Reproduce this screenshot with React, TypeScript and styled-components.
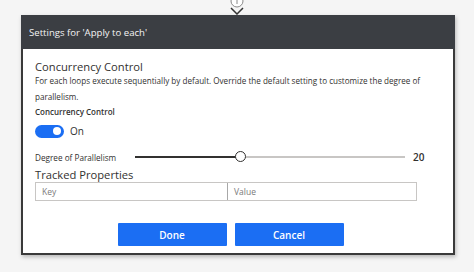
import { createGlobalStyle, styled } from "styled-components";

const GlobalStyle = createGlobalStyle`
  html, body {
    margin: 0;
    padding: 0;
    background: #f5f5f5;
    font-family: "Open Sans", "Noto Sans", sans-serif;
    color: #323130;
  }
`;

const Page = styled.div`
  width: 474px;
  height: 275px;
  display: flex;
  flex-direction: column;
  align-items: center;
  overflow: hidden;
  border-bottom: 3px solid #ffffff;
  box-sizing: border-box;
`;

const Connector = styled.svg`
  display: block;
  height: 15px;
  width: 20px;
`;

const Dialog = styled.div`
  width: 434px;
  margin-left: 2px;
  display: flex;
  flex-direction: column;
  box-shadow: 1px 2px 4px rgba(0, 0, 0, 0.25);
`;

const Header = styled.div`
  height: 34px;
  background: #3b3e43;
  color: #f3f3f3;
  font-size: 9.6px;
  display: flex;
  align-items: center;
  padding-left: 8px;
`;

const Body = styled.div`
  background: #ffffff;
  border: 2px solid #3a3a3a;
  border-top: none;
  padding: 10px 12px 7px 12px;
  display: flex;
  flex-direction: column;
`;

const SectionTitle = styled.div<{ $top?: number }>`
  font-size: 11.2px;
  line-height: 16px;
  margin-top: ${(p) => p.$top ?? 0}px;
  color: #323130;
`;

const Description = styled.div`
  font-size: 8.1px;
  line-height: 16px;
  margin-top: -2px;
  width: 400px;
  color: #323130;
`;

const FieldLabel = styled.div<{ $bold?: boolean }>`
  font-size: 8px;
  line-height: 13px;
  font-weight: ${(p) => (p.$bold ? 600 : 400)};
`;

const ToggleRow = styled.div`
  display: flex;
  align-items: center;
  gap: 6px;
  margin-top: 6px;
  font-size: 10px;
`;

const Toggle = styled.div`
  width: 29px;
  height: 13px;
  border-radius: 7px;
  background: #1b6ef3;
  position: relative;
  &::after {
    content: "";
    position: absolute;
    right: 3px;
    top: 2.5px;
    width: 8px;
    height: 8px;
    border-radius: 50%;
    background: #ffffff;
  }
`;

const SliderRow = styled.div`
  display: flex;
  align-items: center;
  margin-top: 12px;
  height: 14px;
`;

const SliderLabel = styled(FieldLabel)`
  width: 100px;
  font-size: 8.2px;
`;

const Track = styled.div`
  width: 270px;
  height: 2px;
  background: #c8c6c4;
  position: relative;
`;

const Filled = styled.div`
  height: 2px;
  background: #323130;
`;

const Thumb = styled.div`
  position: absolute;
  top: -5px;
  width: 9px;
  height: 9px;
  margin-left: -8px;
  border: 1.5px solid #323130;
  border-radius: 50%;
  background: #ffffff;
`;

const SliderValue = styled.div`
  font-size: 10px;
  font-weight: 600;
  margin-left: 8px;
`;

const PropsGrid = styled.div`
  display: grid;
  grid-template-columns: 191px 191px;
  height: 19px;
  margin-top: -1px;
  border: 1px solid #c8c6c4;
  width: 382px;
  box-sizing: border-box;
`;

const PropInput = styled.div`
  font-size: 8.5px;
  color: #7a7a7a;
  display: flex;
  align-items: center;
  padding-left: 6px;
  & + & {
    border-left: 1px solid #a8a8a8;
  }
`;

const Actions = styled.div`
  display: flex;
  justify-content: center;
  gap: 8px;
  margin-top: 22px;
  padding-right: 15px;
`;

const Button = styled.button`
  width: 109px;
  height: 23px;
  border: none;
  border-radius: 1px;
  background: #1b6ef3;
  color: #ffffff;
  font-family: inherit;
  font-size: 10px;
  font-weight: 600;
`;

export default function App() {
  const value = 20;
  const max = 50;
  const pct = (value / max) * 100;
  return (
    <Page>
      <GlobalStyle />
      <Connector viewBox="0 0 20 15">
        <circle cx="10" cy="1" r="6" fill="#ffffff" stroke="#8a8a8a" strokeWidth="1" />
        <path d="M10 -1 L10 4" stroke="#8a8a8a" strokeWidth="1" />
        <path d="M4 8 L10 14 L16 8" fill="none" stroke="#333" strokeWidth="1.5" />
      </Connector>
      <Dialog>
        <Header>Settings for 'Apply to each'</Header>
        <Body>
          <SectionTitle>Concurrency Control</SectionTitle>
          <Description>
            For each loops execute sequentially by default. Override the default setting to
            customize the degree of parallelism.
          </Description>
          <FieldLabel $bold>Concurrency Control</FieldLabel>
          <ToggleRow>
            <Toggle />
            On
          </ToggleRow>
          <SliderRow>
            <SliderLabel>Degree of Parallelism</SliderLabel>
            <Track>
              <Filled style={{ width: `${pct}%` }} />
              <Thumb style={{ left: `${pct}%` }} />
            </Track>
            <SliderValue>{value}</SliderValue>
          </SliderRow>
          <SectionTitle $top={3}>Tracked Properties</SectionTitle>
          <PropsGrid>
            <PropInput>Key</PropInput>
            <PropInput>Value</PropInput>
          </PropsGrid>
          <Actions>
            <Button>Done</Button>
            <Button>Cancel</Button>
          </Actions>
        </Body>
      </Dialog>
    </Page>
  );
}
